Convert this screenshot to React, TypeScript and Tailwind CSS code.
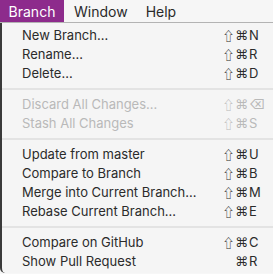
type Item = {
  label: string
  keys: string[]
  disabled?: boolean
}

const groups: Item[][] = [
  [
    { label: "New Branch…", keys: ["⇧", "⌘", "N"] },
    { label: "Rename…", keys: ["⇧", "⌘", "R"] },
    { label: "Delete…", keys: ["⇧", "⌘", "D"] },
  ],
  [
    { label: "Discard All Changes…", keys: ["⇧", "⌘", "⌫"], disabled: true },
    { label: "Stash All Changes", keys: ["⇧", "⌘", "S"], disabled: true },
  ],
  [
    { label: "Update from master", keys: ["⇧", "⌘", "U"] },
    { label: "Compare to Branch", keys: ["⇧", "⌘", "B"] },
    { label: "Merge into Current Branch…", keys: ["⇧", "⌘", "M"] },
    { label: "Rebase Current Branch…", keys: ["⇧", "⌘", "E"] },
  ],
  [
    { label: "Compare on GitHub", keys: ["⇧", "⌘", "C"] },
    { label: "Show Pull Request", keys: ["", "⌘", "R"] },
  ],
]

const MenuRow = ({ item }: { item: Item }) => {
  const color = item.disabled ? "text-[#b9b9b9]" : "text-[#2b2b2b]"
  return (
    <div className={`flex h-[19px] items-center justify-between pl-[20px] pr-[12px] ${color}`}>
      <span className="text-[13px] leading-none">{item.label}</span>
      <span className="flex items-center text-[13px] leading-none">
        <span className="w-[13px] text-center font-['Noto_Sans_CJK_SC',sans-serif] text-[12px]">{item.keys[0]}</span>
        <span className="w-[13px] text-center font-['DejaVu_Sans',sans-serif] text-[13px]">{item.keys[1]}</span>
        <span className="w-[13px] pl-[1px] text-left">{item.keys[2]}</span>
      </span>
    </div>
  )
}

export default function App() {
  return (
    <div className="h-[274px] w-[273px] overflow-hidden bg-[#f7f7f7] font-['Inter',sans-serif]">
      <div className="flex h-[23px] items-stretch border-b border-[#b3b3b3] bg-[#f6f6f6] text-[14px] text-[#2a2a2a]">
        <div className="flex w-[64px] items-center justify-center bg-[#8d2b8c] text-white">Branch</div>
        <div className="flex items-center pl-[10px]">Window</div>
        <div className="flex items-center pl-[18px]">Help</div>
      </div>
      <div className="h-[250px] rounded-bl-[5px] border-l-2 border-[#3a3a3a] bg-[#f5f5f5] pt-[3px]">
        {groups.map((group, gi) => (
          <div key={gi}>
            {gi > 0 && (
              <div className="flex h-[12px] items-center">
                <div className="h-[2px] w-full bg-[#e3e3e3]" />
              </div>
            )}
            {group.map((item) => (
              <MenuRow key={item.label} item={item} />
            ))}
          </div>
        ))}
      </div>
    </div>
  )
}
